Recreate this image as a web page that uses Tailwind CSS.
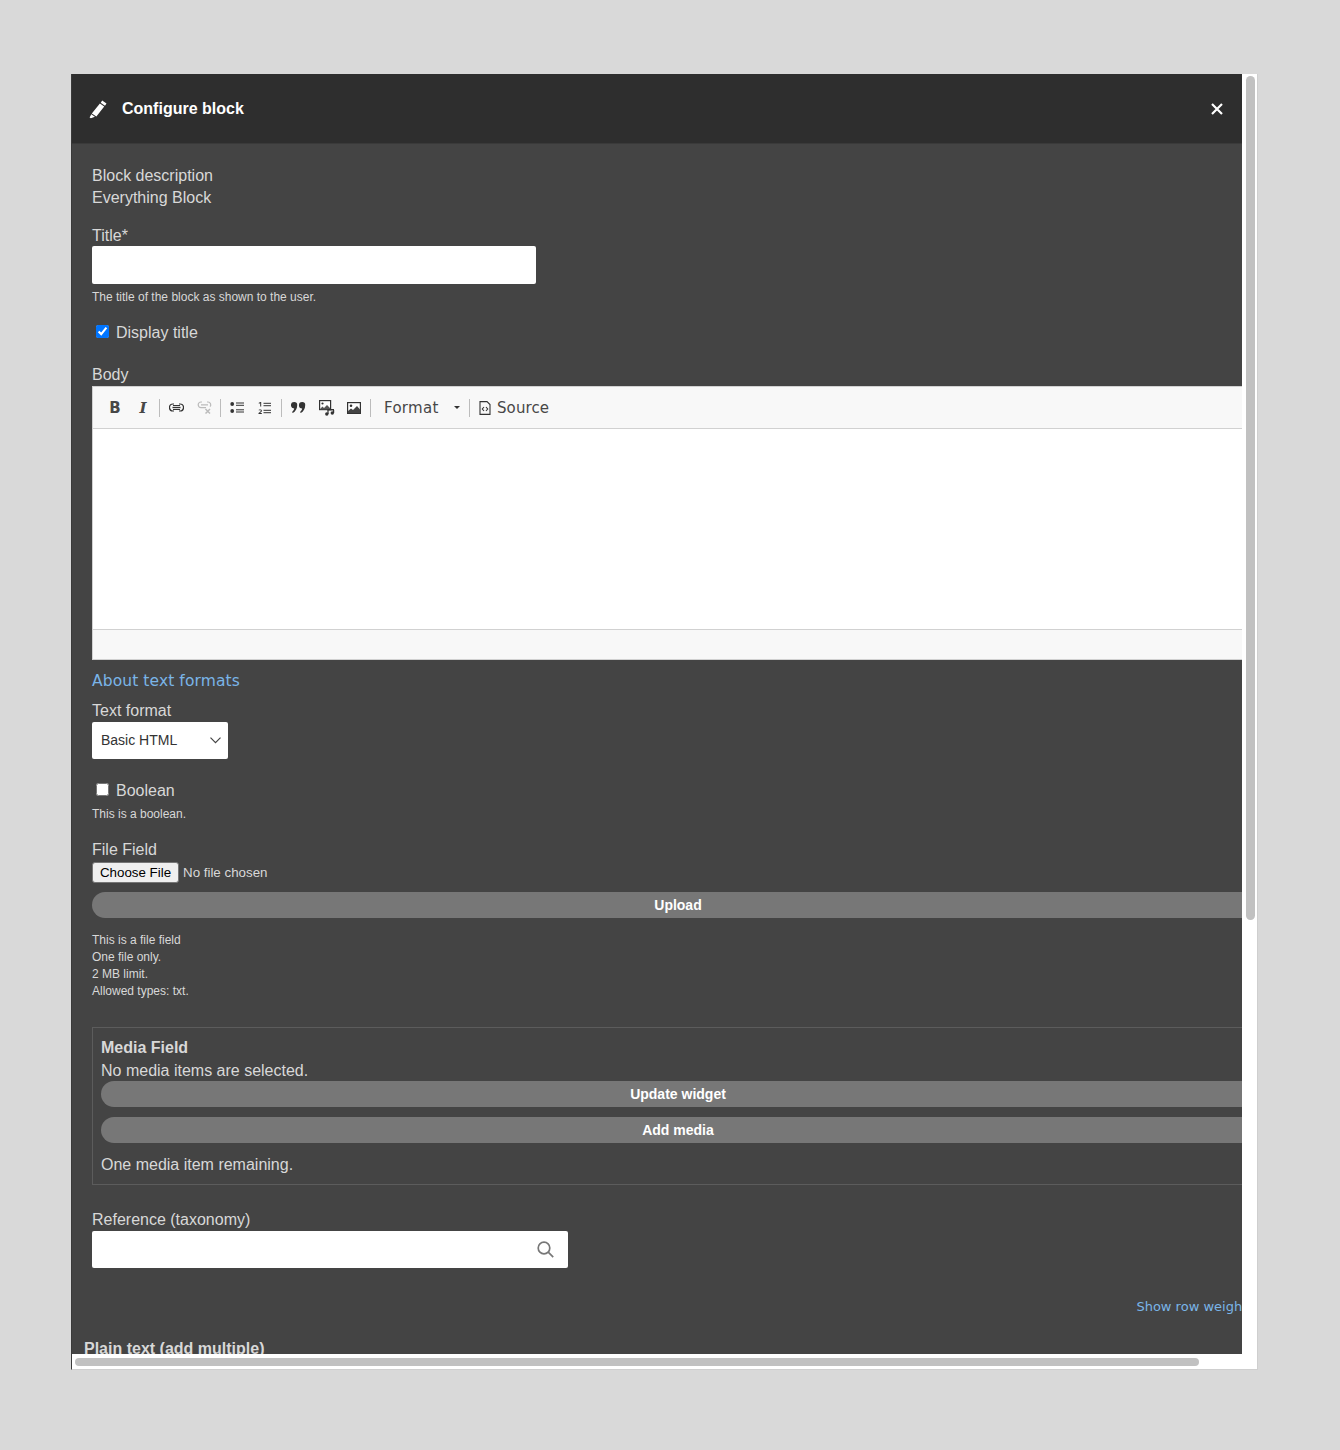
<!DOCTYPE html>
<html lang="en">
<head>
    <meta charset="UTF-8">
    <meta name="viewport" content="width=device-width, initial-scale=1.0">
    <title>Configure block</title>
    <script src="https://cdn.jsdelivr.net/npm/@tailwindcss/browser@4"></script>
</head>
<body class="bg-[#d9d9d9] h-[1450px] overflow-hidden font-['Liberation_Sans',Arial,sans-serif] text-[16px] text-[#d8d8d8]">
    <div class="pt-[74px] pl-[71px]">
        <!-- Dialog window -->
        <div class="relative w-[1187px] h-[1296px] bg-white border-l border-l-[#3a3a3a] border-r border-b border-r-[#cfcfcf] border-b-[#cfcfcf] overflow-hidden">
            <div class="w-[1170px] h-[1280px] overflow-hidden bg-[#444444]">
                <!-- Title bar -->
                <div class="h-[70px] bg-[#2e2e2e] flex items-center pl-[16px] pr-[19px] w-[1170px] border-b border-[#3a3a3a]">
                    <svg class="w-[20px] h-[20px]" viewBox="0 0 20 20" fill="#fff"><path d="M14.2 1.600l4.300 3-1.500 2.200-4.300-3zM11.900 4.600l4.300 3-7.800 10-4.600 -3.200zM3.300 15.200l3.600 2.600-4 1.500-1.300-.9z"/></svg>
                    <span class="ml-[14px] font-bold text-[16px] text-white">Configure block</span>
                    <svg class="ml-auto w-[12px] h-[12px]" viewBox="0 0 12 12" stroke="#fff" stroke-width="2.200" fill="none"><path d="M1 1l10 10M11 1L1 11"/></svg>
                </div>

                <!-- Form -->
                <div class="w-[1193px] pl-[20px] pr-0">
                    <div class="pt-[21px] leading-[22px]">
                        <div>Block description</div>
                        <div>Everything Block</div>
                    </div>

                    <div class="mt-[16px] leading-[22px] h-[21px]">Title*</div>
                    <input type="text" class="block w-[444px] h-[38px] bg-white rounded-[2px]">
                    <div class="mt-[6px] text-[12px] leading-[15px]">The title of the block as shown to the user.</div>

                    <label class="mt-[17px] ml-[4px] flex items-center h-[22px]">
                        <input type="checkbox" checked class="w-[13px] h-[13px] m-0 mb-[3px]">
                        <span class="ml-[7px]">Display title</span>
                    </label>

                    <div class="mt-[19px] leading-[23px] h-[23px]">Body</div>

                    <!-- Text editor -->
                    <div class="w-[1172px] h-[274px] border border-[#d1d1d1] bg-white text-[#474747]">
                        <div class="h-[42px] bg-[#f8f8f8] border-b border-[#d1d1d1] flex items-center pl-[16px] font-['DejaVu_Sans',sans-serif]">
                            <span class="w-[12px] text-center font-bold text-[15px] font-['DejaVu_Sans',sans-serif] mt-[2px]">B</span>
                            <span class="ml-[16px] w-[12px] text-center font-bold italic text-[15px] font-['DejaVu_Serif',serif] mt-[2px]">I</span>
                            <span class="ml-[10px] w-px h-[18px] bg-[#bcbcbc]"></span>
                            <svg class="ml-[9px] w-[15px] h-[9px]" viewBox="0 0 15 9" fill="none" stroke="#333" stroke-width="1.200"><path d="M5 1H4a3.500 3.500 0 0 0 0 7h1M10 1h1a3.500 3.500 0 0 1 0 7h-1"/><path d="M3.500 4.500H11.500" stroke-width="1.400"/><path d="M4 2.500h7M4 6.500h7" stroke-width="1"/></svg>
                            <svg class="ml-[13px] w-[15px] h-[13px]" viewBox="0 0 15 13" fill="none" stroke="#bbb" stroke-width="1.200"><path d="M5 1H4a2.800 2.800 0 0 0 0 5.600h5M10 1h1a2.800 2.800 0 0 1 2 4.700M4 3.800h7"/><path d="M8.500 8l4.500 4.500M13 8l-4.500 4.500" stroke-width="1.500"/></svg>
                            <span class="ml-[8px] w-px h-[18px] bg-[#bcbcbc]"></span>
                            <svg class="ml-[9px] w-[14px] h-[11px]" viewBox="0 0 14 11" fill="#333"><circle cx="2.200" cy="2" r="1.900"/><circle cx="2.200" cy="9" r="1.900"/><rect x="6" y=".5" width="8" height="1"/><rect x="6" y="2.800" width="8" height="1"/><rect x="6" y="7.300" width="8" height="1"/><rect x="6" y="9.500" width="8" height="1"/></svg>
                            <svg class="ml-[14px] w-[13px] h-[12px]" viewBox="0 0 13 12" fill="#333"><path d="M.8 .8L2.500 0h.7v4.500H2.200V1.200L.8 1.700z"/><path d="M.5 12V11c1-1 2.400-1.500 2.400-2.300 0-.7-1.300-.5-2.100-.1v-.8c1.200-.5 3.100-.5 3.100.9 0 1-1.100 1.500-1.900 2.400H3.800V12z"/><rect x="5.500" y=".8" width="7.500" height="1"/><rect x="5.500" y="3.200" width="7.500" height="1"/><rect x="5.500" y="7.800" width="7.500" height="1"/><rect x="5.500" y="10.200" width="7.500" height="1"/></svg>
                            <span class="ml-[10px] w-px h-[18px] bg-[#bcbcbc]"></span>
                            <svg class="ml-[9px] w-[15px] h-[11px]" viewBox="0 0 15 11" fill="#333"><path d="M3.200 0a3 3 0 0 1 3 3.200C6.200 6.500 4.500 9.600 1.800 11l-.8-1c1.200-1 2-2.200 2.200-3.500A3.200 3.200 0 0 1 3.200 0z"/><path d="M11.200 0a3 3 0 0 1 3 3.200c0 3.300-1.700 6.400-4.400 7.800l-.8-1c1.200-1 2-2.200 2.200-3.500a3.200 3.200 0 0 1 0-6.500z"/></svg>
                            <svg class="ml-[13px] w-[16px] h-[16px]" viewBox="0 0 16 16"><rect x=".6" y=".6" width="11" height="9" fill="#fff" stroke="#333" stroke-width="1.200"/><circle cx="3.500" cy="3.500" r="1.100" fill="#333"/><path d="M1 9l2.500-2.500L5 8l3-3 3 3v1.500H1z" fill="#555"/><path d="M8.500 9h6.500v1.500H8.500z" fill="#333"/><circle cx="7.800" cy="14" r="1.700" fill="#333"/><circle cx="13.300" cy="13" r="1.700" fill="#333"/><path d="M9 10v4M14.600 10v3" stroke="#333" stroke-width="1.200"/></svg>
                            <svg class="ml-[12px] w-[14px] h-[12px]" viewBox="0 0 14 12"><rect x=".6" y=".6" width="12.800" height="10.800" fill="#fff" stroke="#333" stroke-width="1.200"/><circle cx="4" cy="3.700" r="1.300" fill="#333"/><path d="M1 11V9l3-2.500 2 1.500 4-4 3 3.500V11z" fill="#444"/></svg>
                            <span class="ml-[9px] w-px h-[18px] bg-[#bcbcbc]"></span>
                            <span class="ml-[13px] w-[55px] text-[15px] tracking-[0.3px] mt-[2px]">Format</span>
                            <span class="ml-[15px] w-0 h-0 border-x-[3px] border-x-transparent border-t-[3px] border-t-[#333]"></span>
                            <span class="ml-[9px] w-px h-[18px] bg-[#bcbcbc]"></span>
                            <svg class="ml-[9px] w-[12px] h-[14px]" viewBox="0 0 12 14" fill="none" stroke="#333" stroke-width="1.100"><path d="M1 .6h7l3 3v9.800H1z"/><path d="M5 6L3.300 8 5 10M7 6l1.700 2L7 10"/></svg>
                            <span class="ml-[6px] text-[15px] tracking-[0.1px] mt-[2px]">Source</span>
                        </div>
                        <div class="h-[201px] bg-white border-b border-[#d1d1d1]"></div>
                        <div class="h-[29px] bg-[#f8f8f8]"></div>
                    </div>

                    <a href="#" class="block mt-[10px] leading-[23px] text-[#7ab5e8] font-['DejaVu_Sans',sans-serif] text-[15.500px] tracking-[0.1px]">About text formats</a>

                    <div class="mt-[6px] leading-[23px] h-[23px]">Text format</div>
                    <div class="relative w-[136px] h-[37px]">
                        <select class="block w-full h-full appearance-none bg-white text-[#333] rounded-[2px] pl-[9px] text-[14px]"><option>Basic HTML</option></select>
                        <svg class="absolute right-[7px] top-[15px] w-[11px] h-[7px] pointer-events-none" viewBox="0 0 11 7" fill="none" stroke="#444" stroke-width="1.200"><path d="M.5 .7l5 5 5-5"/></svg>
                    </div>

                    <label class="mt-[21px] ml-[4px] flex items-center h-[22px]">
                        <input type="checkbox" class="w-[13px] h-[13px] m-0 mb-[3px]">
                        <span class="ml-[7px]">Boolean</span>
                    </label>
                    <div class="mt-[5px] text-[12px] leading-[15px]">This is a boolean.</div>

                    <div class="mt-[16px] leading-[23px] h-[23px]">File Field</div>
                    <input type="file" class="block h-[21px] mt-[1px] text-[13.333px] file:h-[21px] file:w-[87px] file:mr-[4px] file:border file:border-[#767676] file:rounded-[3px] file:bg-[#efefef] file:text-black file:text-[13.333px]">
                    <button class="block mt-[9px] w-[1172px] h-[26px] rounded-full bg-[#777777] text-white font-bold text-[14px] text-center">Upload</button>

                    <div class="mt-[14px] text-[12px] leading-[17px]">
                        <div>This is a file field</div>
                        <div>One file only.</div>
                        <div>2 MB limit.</div>
                        <div>Allowed types: txt.</div>
                    </div>

                    <!-- Media field -->
                    <div class="mt-[27px] w-[1172px] h-[158px] border border-[#5c5c5c] px-[8px] pt-[9px]">
                        <div class="font-bold leading-[22px]">Media Field</div>
                        <div class="leading-[22px] mt-[1px]">No media items are selected.</div>
                        <button class="block w-full h-[26px] -mt-[1px] rounded-full bg-[#777777] text-white font-bold text-[14px] text-center">Update widget</button>
                        <button class="block w-full h-[26px] mt-[10px] rounded-full bg-[#777777] text-white font-bold text-[14px] text-center">Add media</button>
                        <div class="mt-[11px] leading-[22px]">One media item remaining.</div>
                    </div>

                    <div class="mt-[23px] leading-[23px] h-[23px]">Reference (taxonomy)</div>
                    <div class="relative w-[476px] h-[37px] bg-white rounded-[2px]">
                        <svg class="absolute right-[14px] top-[10px] w-[17px] h-[17px]" viewBox="0 0 17 17" fill="none" stroke="#777" stroke-width="1.700"><circle cx="7" cy="7" r="5.800"/><path d="M11.200 11.200l5 5"/></svg>
                    </div>

                    <div class="mt-[27px] w-[1172px] pr-[10px] text-right leading-[23px] text-[#7ab5e8] font-['DejaVu_Sans',sans-serif] text-[13px]">Show row weights</div>
                    <div class="mt-[19px] -ml-[8px] font-bold leading-[23px]">Plain text (add multiple)</div>
                </div>
            </div>

            <!-- Scrollbars -->
            <div class="absolute left-[1174px] top-[2px] w-[9px] h-[844px] rounded-full bg-[#c1c1c1]"></div>
            <div class="absolute left-[3px] top-[1284px] w-[1124px] h-[8px] rounded-full bg-[#c1c1c1]"></div>
        </div>
    </div>
</body>
</html>
